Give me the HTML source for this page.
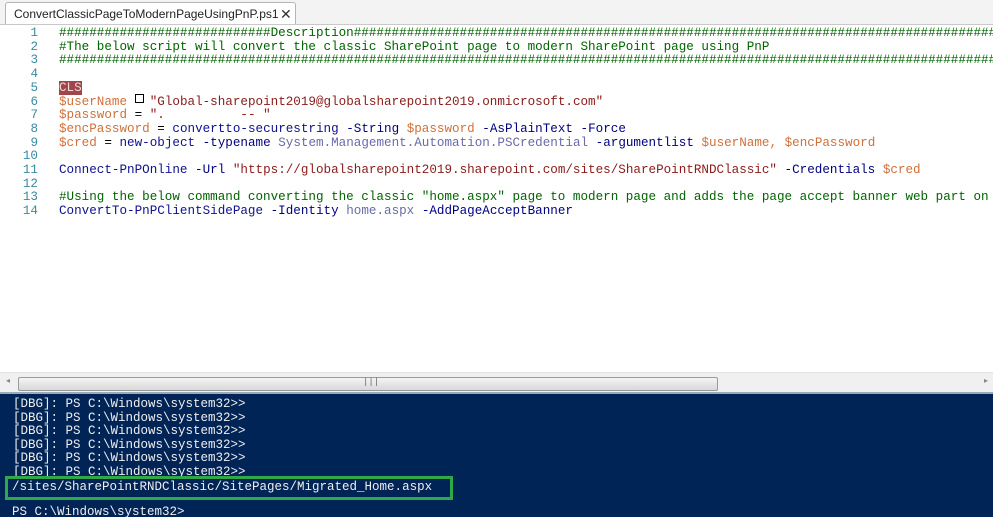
<!DOCTYPE html>
<html><head><meta charset="utf-8"><style>
body{margin:0;width:993px;height:517px;overflow:hidden;background:#fff;position:relative;font-family:"Liberation Mono",monospace}
.tabbar{position:absolute;left:0;top:0;width:993px;height:24px;background:#f3f3f3;border-bottom:1px solid #c9c9c9}
.tab{position:absolute;left:5px;top:2px;width:291px;height:22px;background:#fff;border:1px solid #b5b5b5;border-bottom:none;border-radius:3px 3px 0 0;font:12px "Liberation Sans",sans-serif;color:#222;line-height:22px;padding-left:8px;box-sizing:border-box}
.tab b{position:absolute;left:274px;top:0;font-weight:normal;font-size:14px;color:#333}
.code{position:absolute;left:0;top:27px;font-size:12.6px;line-height:13.7px;white-space:pre;color:#000;width:993px;overflow:hidden}
.ln{display:inline-block;width:38px;text-align:right;color:#3a8aa0;margin-right:21px}
.c{color:#006400}.v{color:#d0703a}.s{color:#8b1a1a}.k{color:#101090}.p{color:#000080}.t{color:#6a6aa8}
.cls{background:#a0464a;color:#f0d8d8}
.sb{position:absolute;left:0;top:372px;width:993px;height:19px;background:#f0f0f0;border-top:1px solid #e0e0e0}
.thumb{position:absolute;left:18px;top:4px;width:698px;height:12px;background:linear-gradient(#f4f4f4,#d8d8d8);border:1px solid #9a9a9a;border-radius:2px}
.con{position:absolute;left:0;top:392px;width:993px;height:125px;background:#012456;border-top:2px solid #9ab;box-sizing:border-box;color:#eee;font-size:12.5px;line-height:13.5px;white-space:pre}
.box{position:absolute;left:5px;top:82px;width:448px;height:24px;border:3px solid #2ea84a;box-sizing:border-box}
</style></head><body>
<div class="tabbar"><div class="tab">ConvertClassicPageToModernPageUsingPnP.ps1<b>✕</b></div></div>
<div class="code"><span class="ln">1</span><span class="c">############################Description#####################################################################################</span>
<span class="ln">2</span><span class="c">#The below script will convert the classic SharePoint page to modern SharePoint page using PnP</span>
<span class="ln">3</span><span class="c">################################################################################################################################</span>
<span class="ln">4</span>
<span class="ln">5</span><span class="cls">CLS</span>
<span class="ln">6</span><span class="v">$userName</span> = <span class="s">"Global-sharepoint2019@globalsharepoint2019.onmicrosoft.com"</span>
<span class="ln">7</span><span class="v">$password</span> = <span class="s">".          -- "</span>
<span class="ln">8</span><span class="v">$encPassword</span> = <span class="k">convertto-securestring</span> <span class="p">-String</span> <span class="v">$password</span> <span class="p">-AsPlainText</span> <span class="p">-Force</span>
<span class="ln">9</span><span class="v">$cred</span> = <span class="k">new-object</span> <span class="p">-typename</span> <span class="t">System.Management.Automation.PSCredential</span> <span class="p">-argumentlist</span> <span class="v">$userName, $encPassword</span>
<span class="ln">10</span>
<span class="ln">11</span><span class="k">Connect-PnPOnline</span> <span class="p">-Url</span> <span class="s">"https://globalsharepoint2019.sharepoint.com/sites/SharePointRNDClassic"</span> <span class="p">-Credentials</span> <span class="v">$cred</span>
<span class="ln">12</span>
<span class="ln">13</span><span class="c">#Using the below command converting the classic "home.aspx" page to modern page and adds the page accept banner web part on</span>
<span class="ln">14</span><span class="k">ConvertTo-PnPClientSidePage</span> <span class="p">-Identity</span> <span class="t">home.aspx</span> <span class="p">-AddPageAcceptBanner</span></div>
<div style="position:absolute;left:135px;top:94px;width:7px;height:7px;border:1px solid #000;background:#fff"></div>
<div class="sb"><span style="position:absolute;left:6px;top:3px;font-size:8px;color:#888">◂</span><div class="thumb"><span style="position:absolute;left:344px;top:-1px;font-size:9px;color:#666">|||</span></div><span style="position:absolute;left:984px;top:3px;font-size:8px;color:#888">▸</span></div>
<div class="con"><div style="position:absolute;left:13px;top:4px">[DBG]: PS C:\Windows\system32>>
[DBG]: PS C:\Windows\system32>>
[DBG]: PS C:\Windows\system32>>
[DBG]: PS C:\Windows\system32>>
[DBG]: PS C:\Windows\system32>>
[DBG]: PS C:\Windows\system32>></div>
<div class="box"></div>
<div style="position:absolute;left:12px;top:87px">/sites/SharePointRNDClassic/SitePages/Migrated_Home.aspx</div>
<div style="position:absolute;left:12px;top:112px">PS C:\Windows\system32></div></div>
</body></html>
